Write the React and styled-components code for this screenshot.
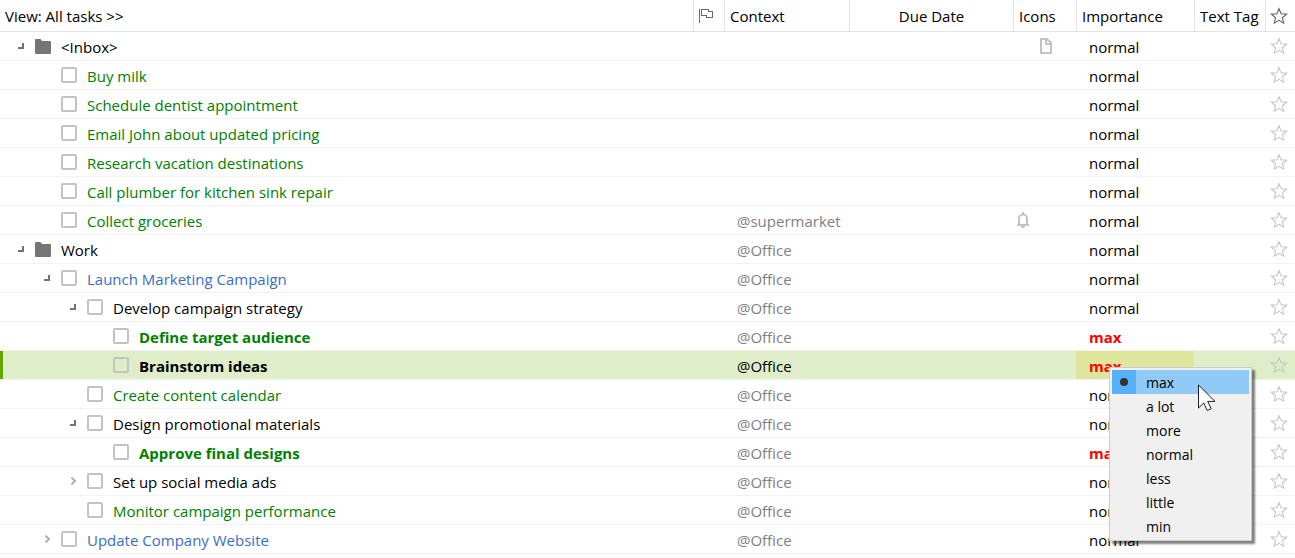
import { Fragment, useState } from "react";
import styled, { createGlobalStyle, css } from "styled-components";

const GlobalStyle = createGlobalStyle`
  * {
    box-sizing: border-box;
  }

  body {
    margin: 0;
    background-color: #fff;
    color: #000;
    font-family: "Open Sans", "Noto Sans", sans-serif;
    font-size: 15px;
    line-height: 20px;
  }

  button,
  input {
    font: inherit;
    color: inherit;
  }
`;

const nameColors = {
  next: "#008000",
  project: "#3a6ec4",
  plain: "#000",
};

const Table = styled.table`
  width: 100%;
  table-layout: fixed;
  border-collapse: separate;
  border-spacing: 0;
`;

const Col = styled.col`
  width: ${(props) => props.$width}px;
`;

const HeadCell = styled.th`
  height: 32px;
  padding: 0 5px;
  border-bottom: 1px solid #e3e3e3;
  border-left: 1px solid #e3e3e3;
  font-weight: 400;
  text-align: ${(props) => props.$align || "left"};
  white-space: nowrap;

  &:first-child {
    border-left: none;
  }

  &:last-child {
    padding: 0 4px;
  }

  & svg {
    display: block;
  }
`;

const ViewButton = styled.button`
  padding: 0;
  border: none;
  background: none;
`;

const Cell = styled.td`
  height: 29px;
  padding: 0 0 0 ${(props) => props.$pad || 0}px;
  border-bottom: 1px solid #f2f2f2;
  white-space: nowrap;
`;

const Row = styled.tr`
  ${(props) =>
    props.$selected &&
    css`
      background-color: #dfedc8;

      & > td:first-child {
        box-shadow: inset 3px 0 #64a600;
      }
    `}
`;

const NameBox = styled.div`
  display: flex;
  align-items: center;
  padding-left: ${(props) => 9 + props.$level * 26}px;
`;

const Expander = styled.button`
  display: flex;
  align-items: center;
  justify-content: center;
  width: 26px;
  height: 20px;
  padding: 0 2px 0 0;
  border: none;
  background: none;
`;

const ExpanderSpace = styled.span`
  width: 26px;
`;

const Checkbox = styled.input`
  appearance: none;
  width: 16px;
  height: 16px;
  margin: 0;
  border: 2px solid #c3c3c3;
  border-radius: 2px;

  &:checked {
    background-color: #c3c3c3;
  }
`;

const Name = styled.label`
  padding: 2px 0 0 10px;
  color: ${(props) => nameColors[props.$kind]};
  font-weight: ${(props) => (props.$bold ? 700 : 400)};
`;

const Context = styled.div`
  padding-top: 2px;
  color: ${(props) => (props.$selected ? "#000" : "#808080")};
`;

const ImportanceCell = styled(Cell)`
  position: relative;
  background-color: ${(props) => (props.$selected ? "#dee59c" : "transparent")};
`;

const Importance = styled.div`
  padding-top: 2px;
  color: ${(props) => (props.$max ? "#f00" : "#000")};
  font-weight: ${(props) => (props.$max ? 700 : 400)};
`;

const IconButton = styled.button`
  display: block;
  padding: 0;
  border: none;
  background: none;

  & svg {
    display: block;
  }
`;

const Icons = styled.div`
  display: flex;
  justify-content: ${(props) => (props.$icon === "bell" ? "flex-start" : "flex-end")};
  padding-right: 23px;
`;

const Menu = styled.div`
  position: absolute;
  z-index: 1;
  top: 16px;
  left: 33px;
  width: 143px;
  padding: 2px;
  border: 1px solid #ccc;
  background-color: #f0f0f0;
  box-shadow: 3px 3px 2px rgba(0, 0, 0, 0.5);
`;

const MenuItem = styled.button`
  display: flex;
  align-items: center;
  width: 100%;
  height: 24px;
  padding: 0;
  border: none;
  background-color: ${(props) => (props.$active ? "#91c9f7" : "transparent")};
  font-size: 14px;
`;

const MenuMark = styled.span`
  display: flex;
  align-items: center;
  justify-content: center;
  width: 24px;
  height: 24px;
  margin-right: 10px;
  background-color: ${(props) => (props.$active ? "#56b0fa" : "transparent")};
`;

const MenuLabel = styled.span`
  padding-top: 2px;
`;

const Dot = styled.span`
  width: 8px;
  height: 8px;
  border-radius: 50%;
  background-color: #333;
`;

const Pointer = styled.svg`
  position: absolute;
  top: 16px;
  left: 87px;
  pointer-events: none;
`;

const columns = [undefined, 31, 125, 164, 63, 118, 71, 30];

const tasks = [
  { id: "inbox", name: "<Inbox>", level: 0, folder: true, open: true, icon: "note" },
  { id: "milk", name: "Buy milk", level: 1, kind: "next" },
  { id: "dentist", name: "Schedule dentist appointment", level: 1, kind: "next" },
  { id: "email", name: "Email John about updated pricing", level: 1, kind: "next" },
  { id: "vacation", name: "Research vacation destinations", level: 1, kind: "next" },
  { id: "plumber", name: "Call plumber for kitchen sink repair", level: 1, kind: "next" },
  { id: "groceries", name: "Collect groceries", level: 1, kind: "next", context: "@supermarket", icon: "bell" },
  { id: "work", name: "Work", level: 0, folder: true, open: true, context: "@Office" },
  { id: "launch", name: "Launch Marketing Campaign", level: 1, kind: "project", open: true, context: "@Office" },
  { id: "strategy", name: "Develop campaign strategy", level: 2, open: true, context: "@Office" },
  { id: "audience", name: "Define target audience", level: 3, kind: "next", context: "@Office", importance: "max" },
  { id: "ideas", name: "Brainstorm ideas", level: 3, context: "@Office", importance: "max" },
  { id: "calendar", name: "Create content calendar", level: 2, kind: "next", context: "@Office" },
  { id: "promo", name: "Design promotional materials", level: 2, open: true, context: "@Office" },
  { id: "designs", name: "Approve final designs", level: 3, kind: "next", context: "@Office", importance: "max" },
  { id: "ads", name: "Set up social media ads", level: 2, open: false, context: "@Office" },
  { id: "monitor", name: "Monitor campaign performance", level: 2, kind: "next", context: "@Office" },
  { id: "website", name: "Update Company Website", level: 1, kind: "project", open: false, context: "@Office" },
];

const levels = ["max", "a lot", "more", "normal", "less", "little", "min"];

function ExpanderIcon({ open }) {
  return open ? (
    <svg width="8" height="8" viewBox="0 0 8 8" shapeRendering="crispEdges">
      <path d="M5 1h2v6H1V5h4z" fill="#737373" />
    </svg>
  ) : (
    <svg width="8" height="8" viewBox="0 0 8 8">
      <path d="M2.500 0.500 6 4 2.500 7.500" fill="none" stroke="#b0b0b0" strokeWidth="2" />
    </svg>
  );
}

function FolderIcon() {
  return (
    <svg width="16" height="16" viewBox="0 0 16 16">
      <path d="M1 1h4.500l1.500 2h8a1 1 0 0 1 1 1v11a1 1 0 0 1-1 1H1a1 1 0 0 1-1-1V2a1 1 0 0 1 1-1z" fill="#757575" />
    </svg>
  );
}

function FlagIcon() {
  return (
    <svg width="16" height="16" viewBox="0 0 16 16" shapeRendering="crispEdges">
      <path d="M.5 1v14M2.500 1.500h7v2h4v6h-6v-2h-5z" fill="none" stroke="#6a6a6a" />
    </svg>
  );
}

function StarIcon({ color }) {
  return (
    <svg width="18" height="18" viewBox="0 0 18 18">
      <path
        d="M9 1.600 11.100 6.800 16.600 7.200 12.400 10.800 13.700 16.200 9 13.300 4.300 16.200 5.600 10.800 1.400 7.200 6.900 6.800z"
        fill="none"
        stroke={color}
        strokeWidth="1.100"
      />
    </svg>
  );
}

function NoteIcon() {
  return (
    <svg width="14" height="16" viewBox="0 0 14 16">
      <path d="M2 1h6l4 4v10H2zM7 1v5h5" fill="none" stroke="#c3c3c3" strokeWidth="2" strokeLinejoin="round" />
    </svg>
  );
}

function BellIcon() {
  return (
    <svg width="14" height="16" viewBox="0 0 14 16">
      <path d="M3 13V6.500a4 4 0 0 1 8 0V13" fill="none" stroke="#c3c3c3" strokeWidth="2" />
      <path d="M6 0h2v3H6zM1 12h12v2H1zM5 14h4v1l-1 1H6l-1-1z" fill="#c3c3c3" />
    </svg>
  );
}

function ImportanceMenu({ value, onSelect }) {
  return (
    <Menu role="menu" aria-label="Importance">
      {levels.map((level) => (
        <MenuItem
          key={level}
          role="menuitemradio"
          aria-checked={level === value}
          $active={level === value}
          onClick={() => onSelect(level)}
        >
          <MenuMark $active={level === value}>{level === value && <Dot />}</MenuMark>
          <MenuLabel>{level}</MenuLabel>
        </MenuItem>
      ))}
      <Pointer width="20" height="28" viewBox="0 0 20 28" aria-hidden="true">
        <path
          d="M1.500 1v23l5.200-5 3.500 7.500 4-1.800-3.500-7.300h7.300z"
          fill="#fff"
          stroke="#1b1b2b"
        />
      </Pointer>
    </Menu>
  );
}

function TaskRow({ task, selected }) {
  const [importance, setImportance] = useState(task.importance || "normal");

  return (
    <Row $selected={selected}>
      <Cell>
        <NameBox $level={task.level}>
          {task.open === undefined ? (
            <ExpanderSpace />
          ) : (
            <Expander aria-label="Toggle subtasks" aria-expanded={task.open}>
              <ExpanderIcon open={task.open} />
            </Expander>
          )}
          {task.folder ? <FolderIcon /> : <Checkbox type="checkbox" id={task.id} />}
          <Name
            as={task.folder ? "span" : "label"}
            htmlFor={task.folder ? undefined : task.id}
            $kind={task.kind || "plain"}
            $bold={importance === "max"}
          >
            {task.name}
          </Name>
        </NameBox>
      </Cell>
      <Cell />
      <Cell $pad={13}>
        <Context $selected={selected}>{task.context}</Context>
      </Cell>
      <Cell />
      <Cell $pad={3}>
        {task.icon && (
          <Icons $icon={task.icon}>{task.icon === "bell" ? <BellIcon /> : <NoteIcon />}</Icons>
        )}
      </Cell>
      <ImportanceCell $pad={13} $selected={selected}>
        <Importance $max={importance === "max"}>{importance}</Importance>
        {selected && <ImportanceMenu value={importance} onSelect={setImportance} />}
      </ImportanceCell>
      <Cell />
      <Cell $pad={5}>
        <IconButton aria-label="Star task">
          <StarIcon color="#c6c6c6" />
        </IconButton>
      </Cell>
    </Row>
  );
}

function App() {
  return (
    <Fragment>
      <GlobalStyle />
      <Table>
        <colgroup>
          {columns.map((width, i) => (width ? <Col key={i} $width={width} /> : <col key={i} />))}
        </colgroup>
        <thead>
          <tr>
            <HeadCell>
              <ViewButton>View: All tasks &gt;&gt;</ViewButton>
            </HeadCell>
            <HeadCell aria-label="Flag">
              <FlagIcon />
            </HeadCell>
            <HeadCell>Context</HeadCell>
            <HeadCell $align="center">Due Date</HeadCell>
            <HeadCell>Icons</HeadCell>
            <HeadCell>Importance</HeadCell>
            <HeadCell>Text Tag</HeadCell>
            <HeadCell aria-label="Star">
              <StarIcon color="#606060" />
            </HeadCell>
          </tr>
        </thead>
        <tbody>
          {tasks.map((task) => (
            <TaskRow key={task.id} task={task} selected={task.id === "ideas"} />
          ))}
        </tbody>
      </Table>
    </Fragment>
  );
}

export default App;
